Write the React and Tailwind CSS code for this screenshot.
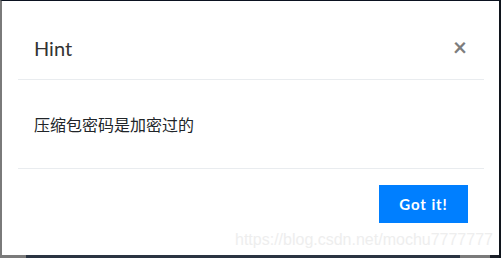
import React from 'react';

const lato = { fontFamily: 'Lato, "Noto Sans CJK SC", sans-serif' };

export default function App() {
  return (
    <div className="relative flex h-[258px] w-[501px] flex-col overflow-hidden border-t border-r-2 border-l-2 border-t-[#0b1220] border-r-[#10151d] border-l-[#7a7a7a] bg-white">
      <div className="flex-1">
        {/* Modal content */}
        <div className="ml-[16px] mt-[16px] w-[466px] bg-white" style={lato}>
          <div className="flex items-start justify-between border-b border-[#e9ecef] p-4">
            <h5 className="text-[20px] leading-[30px] font-normal text-[#333]">Hint</h5>
            <button className="-m-4 ml-auto p-4 pt-[18px] pr-[17px] text-[24px] leading-6 font-bold text-[#7d7d7d]">
              ×
            </button>
          </div>

          <div className="px-4 py-8">
            <p
              className="text-[16px] leading-6 text-[#212529]"
              style={{ fontFamily: '"Noto Sans CJK SC", sans-serif' }}
            >
              压缩包密码是加密过的
            </p>
          </div>

          <div className="flex justify-end border-t border-[#e9ecef] p-4">
            <button className="flex h-[38px] w-[89px] items-center justify-center bg-[#007fff] text-[15px] font-bold tracking-[0.9px] text-white">
              Got it!
            </button>
          </div>
        </div>
      </div>

      {/* Bottom edge of the window behind */}
      <div className="flex h-[3px]">
        <div className="w-[24px] bg-[#7a7a7a]" />
        <div className="flex-1 bg-[#2a3441]" />
        <div className="w-[30px] bg-[#7a7a7a]" />
        <div className="w-[9px] bg-[#1a1f27]" />
      </div>

      {/* CSDN watermark */}
      <span
        className="absolute top-[230px] left-[233px] text-[16px] leading-[18px] text-[#eeeeee]"
        style={{ fontFamily: '"Liberation Sans", Arial, sans-serif' }}
      >
        https://blog.csdn.net/mochu7777777
      </span>
    </div>
  );
}
